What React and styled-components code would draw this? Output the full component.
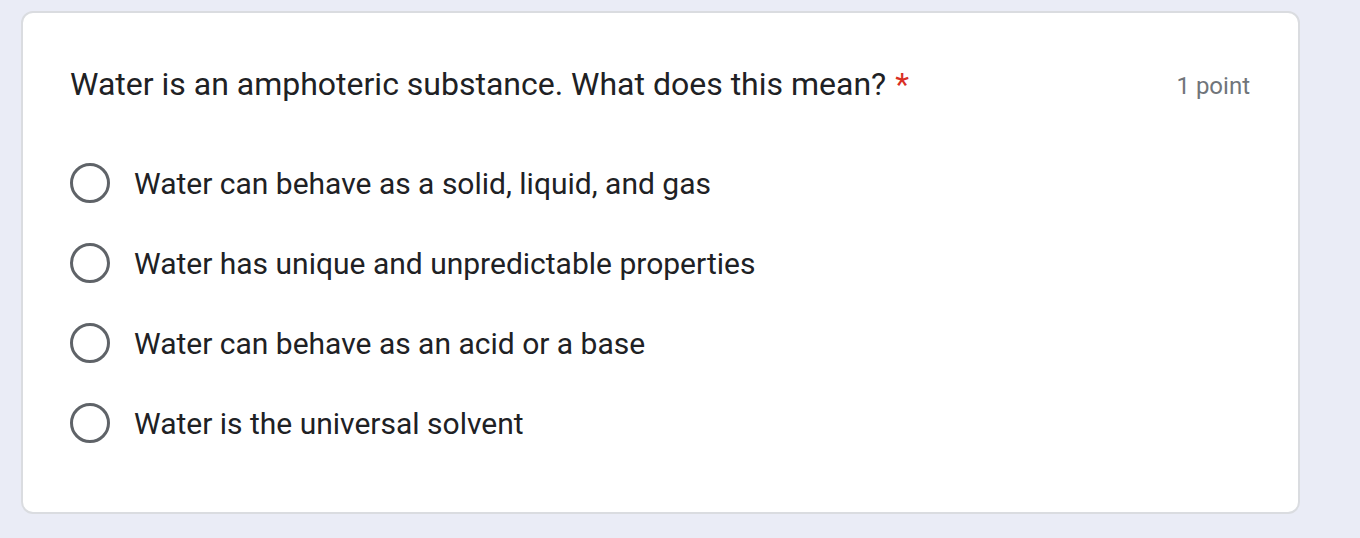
import React from 'react';
import styled, { createGlobalStyle } from 'styled-components';

const GlobalStyle = createGlobalStyle`
  body {
    margin: 0;
    background: #eaecf6;
    font-family: Roboto, 'Liberation Sans', Arial, sans-serif;
  }
`;

const StyledPage = styled.div`
  width: 1360px;
  height: 538px;
  padding: 11px 0 0 21px;
  box-sizing: border-box;
`;

const StyledCard = styled.div`
  width: 1279px;
  height: 503px;
  box-sizing: border-box;
  background: #ffffff;
  border: 2px solid #dadce0;
  border-radius: 12px;
  padding: 51px 48px 0 47px;
`;

const StyledHeader = styled.div`
  display: flex;
  justify-content: space-between;
  align-items: flex-start;
  margin-bottom: 57px;
`;

const StyledTitle = styled.div`
  font-size: 32px;
  line-height: 40px;
  color: #202124;
  .required {
    color: #d93025;
    margin-left: 9px;
  }
`;

const StyledPoints = styled.div`
  font-size: 24px;
  line-height: 40px;
  color: #70757a;
  padding-top: 2px;
`;

const StyledOptions = styled.div`
  display: flex;
  flex-direction: column;
  gap: 40px;
`;

const StyledOption = styled.label`
  display: flex;
  align-items: center;
  gap: 24px;
  height: 40px;
  cursor: pointer;
`;

const StyledRadio = styled.span`
  width: 40px;
  height: 40px;
  box-sizing: border-box;
  border: 3.5px solid #5f6368;
  border-radius: 50%;
  flex-shrink: 0;
`;

const StyledOptionText = styled.span`
  font-size: 30px;
  color: #202124;
`;

const options = [
  'Water can behave as a solid, liquid, and gas',
  'Water has unique and unpredictable properties',
  'Water can behave as an acid or a base',
  'Water is the universal solvent'
];

const App = () => {
  return (
    <>
      <GlobalStyle />
      <StyledPage>
        <StyledCard>
          <StyledHeader>
            <StyledTitle>
              Water is an amphoteric substance. What does this mean?
              <span className='required'>*</span>
            </StyledTitle>
            <StyledPoints>1 point</StyledPoints>
          </StyledHeader>
          <StyledOptions>
            {options.map((option) => (
              <StyledOption key={option}>
                <StyledRadio />
                <StyledOptionText>{option}</StyledOptionText>
              </StyledOption>
            ))}
          </StyledOptions>
        </StyledCard>
      </StyledPage>
    </>
  );
};

export default App;
